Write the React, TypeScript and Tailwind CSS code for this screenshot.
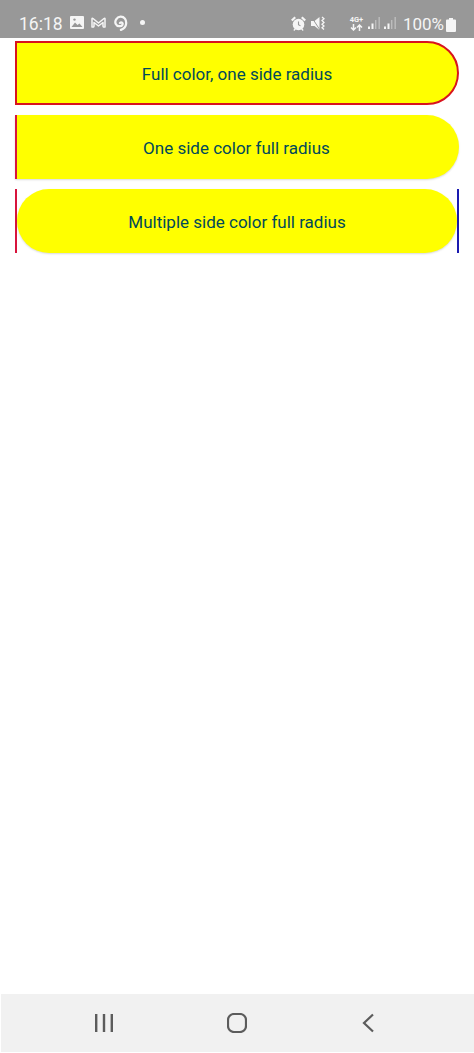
import React from 'react';

function StatusBar() {
    return (
        <div className="h-[38px] shrink-0 bg-[#989898] flex items-end pb-[2px] pl-[19px] pr-[18px] text-[#f5f5f5] font-['Roboto',sans-serif]">
            <span className="text-[17.5px] leading-[24px] w-[44px]">16:18</span>
            <div className="flex items-center h-[24px] ml-[7px] pb-[3px]">
                <svg width="14" height="13" viewBox="0 0 14 13">
                    <rect x="0" y="0" width="14" height="13" rx="1" fill="#f5f5f5" />
                    <path d="M1.500 11l3.500-4.500 2.500 2.500 2-1.500 3 3.500z" fill="#989898" />
                    <circle cx="4.500" cy="3.600" r="1.200" fill="#989898" />
                </svg>
                <svg className="ml-[7px]" width="15" height="11" viewBox="0 0 15 11" fill="none" stroke="#f5f5f5" strokeWidth="1.500">
                    <path d="M1 10V1.800q0-1 1-.3l5.500 4.500L13 1.500q1-.7 1 .3V10q-2 .5-2-1V5.500L7.500 9 3 5.500V9q0 1.500-2 1z" strokeLinejoin="round" />
                </svg>
                <svg className="ml-[6px]" width="16" height="16" viewBox="0 0 16 17" fill="none" stroke="#f5f5f5" strokeWidth="2.400" strokeLinecap="round">
                    <path d="M8 8.500c1.500-1.500 3.500 0 2.500 2S5 12.500 3.500 9.500 4.500 2 8.500 1.800 15 5 14.500 9.500 11.500 15 9 15.800" />
                </svg>
                <span className="ml-[12px] w-[5px] h-[5px] rounded-full bg-[#f5f5f5]" />
            </div>
            <div className="flex-1" />
            <div className="flex items-center h-[24px] pb-[2px]">
                <svg width="15" height="15" viewBox="0 0 15 15" fill="#f5f5f5">
                    <circle cx="7.500" cy="8.500" r="5.800" />
                    <path d="M0 3.800L3.500 .5l1.500 1.500-3.400 3.200zM15 3.800L11.500 .5 10 2l3.400 3.200z" />
                    <path d="M2.800 14.500l1.800-2M12.200 14.500l-1.800-2" stroke="#f5f5f5" strokeWidth="1.200" />
                    <path d="M7.500 5.500v3.200l2 1.200" fill="none" stroke="#989898" strokeWidth="1.100" />
                </svg>
                <svg className="ml-[5px]" width="14" height="15" viewBox="0 0 14 15" fill="#f5f5f5">
                    <path d="M0 5h3.500L8.500 1v13L3.500 10H0z" />
                    <path d="M0.500 1l8.500 13" stroke="#989898" strokeWidth="1" />
                    <path d="M11 1l2 1.800-2 1.800 2 1.800-2 1.800 2 1.800-2 1.800 2 1.800" fill="none" stroke="#f5f5f5" strokeWidth="1.300" />
                </svg>
                <div className="ml-[25px] w-[13px] flex flex-col items-center leading-none">
                    <span className="text-[7.500px] font-bold leading-[8px]">4G+</span>
                    <svg width="13" height="7" viewBox="0 0 13 7" fill="none" stroke="#f5f5f5" strokeWidth="1.500">
                        <path d="M3.500 0v6M1 3.500L3.500 6 6 3.500M9.500 7V1M7 3.500L9.500 1 12 3.500" />
                    </svg>
                </div>
                <svg className="ml-[5px]" width="12" height="14" viewBox="0 0 12 14">
                    <rect x="0" y="10.500" width="2" height="2.500" fill="#f5f5f5" />
                    <rect x="3.500" y="7.500" width="2" height="5.500" fill="#f5f5f5" />
                    <rect x="7" y="4" width="1.400" height="9" fill="#bdbdbd" />
                    <rect x="10.500" y="1" width="1.400" height="12" fill="#bdbdbd" />
                </svg>
                <svg className="ml-[4px]" width="12" height="14" viewBox="0 0 12 14">
                    <rect x="0" y="10.500" width="2" height="2.500" fill="#f5f5f5" />
                    <rect x="3.500" y="7.500" width="2" height="5.500" fill="#f5f5f5" />
                    <rect x="7" y="4" width="1.400" height="9" fill="#bdbdbd" />
                    <rect x="10.500" y="1" width="1.400" height="12" fill="#bdbdbd" />
                </svg>
            </div>
            <span className="ml-[7px] text-[17px] leading-[24px]">100%</span>
            <svg className="ml-[2px] mb-[4px]" width="10" height="14" viewBox="0 0 10 14" fill="#f5f5f5">
                <path d="M3 0h4v1.500h2a1 1 0 0 1 1 1V13a1 1 0 0 1-1 1H1a1 1 0 0 1-1-1V2.500a1 1 0 0 1 1-1h2z" />
            </svg>
        </div>
    );
}

function NavBar() {
    return (
        <div className="h-[58px] shrink-0 mb-[1px] ml-[1px] bg-[#f1f1f1] flex items-center pl-[94px]">
            <svg width="18" height="20" viewBox="0 0 18 20" fill="#5c5c5c">
                <rect x="0" y="1" width="2.400" height="18" />
                <rect x="7.800" y="1" width="2.400" height="18" />
                <rect x="15.600" y="1" width="2.400" height="18" />
            </svg>
            <svg className="ml-[114px]" width="20" height="20" viewBox="0 0 20 20" fill="none" stroke="#5c5c5c" strokeWidth="2.200">
                <rect x="1" y="1" width="18" height="18" rx="6" />
            </svg>
            <svg className="ml-[115px]" width="12" height="20" viewBox="0 0 12 20" fill="none" stroke="#5c5c5c" strokeWidth="2.200">
                <path d="M11 1.500L2 10l9 8.500" />
            </svg>
        </div>
    );
}

export default function App() {
    const label = "pt-[3px] text-[17px] leading-none text-[#00495a] font-['Roboto',sans-serif]";

    return (
        <div className="w-[474px] h-[1053px] bg-white flex flex-col overflow-hidden">
            <StatusBar />

            <main className="flex-1 flex flex-col gap-[10px] pt-[3px] pl-[15px] pr-[15px]">
                {/* Full color, one side radius */}
                <div className="h-[64px] bg-[#ffff00] border-2 border-[#d8141e] rounded-r-[32px] flex items-center justify-center">
                    <span className={label}>Full color, one side radius</span>
                </div>

                {/* One side color full radius */}
                <div className="h-[64px] pr-[3px] bg-[#ffff00] border-l-2 border-[#d8143c] rounded-r-[32px] shadow-[0_1px_2px_rgba(0,0,0,0.15)] flex items-center justify-center">
                    <span className={label}>One side color full radius</span>
                </div>

                {/* Multiple side color full radius */}
                <div className="h-[64px] border-l-2 border-r-2 border-l-[#d8143c] border-r-[#1a1ab0]">
                    <div className="h-full bg-[#ffff00] rounded-[32px] shadow-[0_1px_2px_rgba(0,0,0,0.15)] flex items-center justify-center">
                        <span className={label}>Multiple side color full radius</span>
                    </div>
                </div>
            </main>

            <NavBar />
        </div>
    );
}
